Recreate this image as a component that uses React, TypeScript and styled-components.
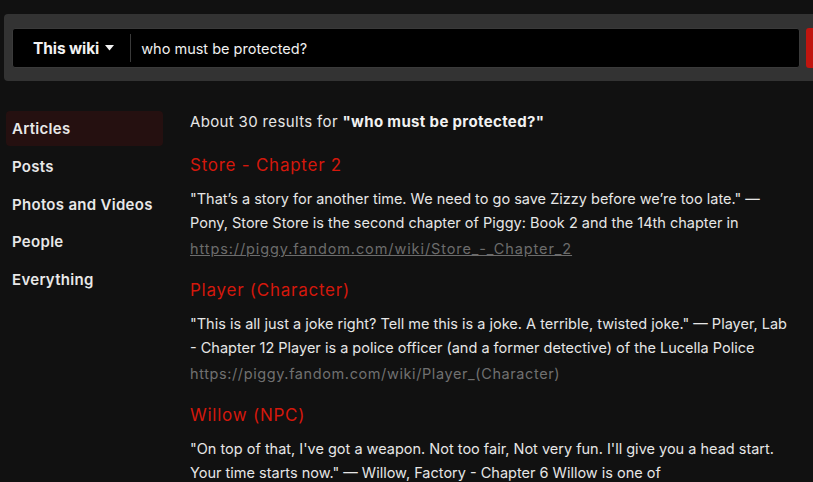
import React from "react";
import styled, { createGlobalStyle } from "styled-components";

const Global = createGlobalStyle`
  html, body { margin: 0; padding: 0; background: #111111; }
  body { font-family: Inter, "Open Sans", sans-serif; color: #e6e6e6; overflow: hidden; }
  * { box-sizing: border-box; }
`;

const Page = styled.div`
  width: 813px;
  height: 482px;
  overflow: hidden;
  background: #111111;
`;

const SearchPanel = styled.div`
  margin: 14px -20px 0 4px;
  height: 67px;
  background: #333333;
  border-radius: 4px;
  padding: 14px 8px 13px 8px;
  display: flex;
  gap: 6px;
`;

const SearchBox = styled.div`
  width: 788px;
  flex: none;
  background: #000;
  border: 1px solid #3a3a3a;
  border-radius: 3px;
  display: flex;
  align-items: center;
`;

const Scope = styled.div`
  display: flex;
  align-items: center;
  gap: 6px;
  padding: 0 16px 0 20px;
  height: 28px;
  border-right: 1px solid #3a3a3a;
  font-weight: 700;
  font-size: 15.5px;
  color: #f2f2f2;
  letter-spacing: -0.1px;
`;

const Query = styled.div`
  padding-left: 10px;
  font-size: 14.5px;
  color: #f0f0f0;
`;

const SubmitButton = styled.div`
  width: 40px;
  background: #c0150f;
  border-radius: 3px;
`;

const Body = styled.div`
  display: flex;
  padding: 30px 0 0 6px;
`;

const Sidebar = styled.nav`
  width: 157px;
  flex: none;
  display: flex;
  flex-direction: column;
  gap: 2.75px;
`;

const NavItem = styled.div<{ $active?: boolean }>`
  height: 35px;
  display: flex;
  align-items: center;
  padding-left: 6px;
  border-radius: 4px;
  background: ${(p) => (p.$active ? "#251010" : "transparent")};
  font-weight: 600;
  font-size: 15px;
  letter-spacing: 0.3px;
  color: #e8e8e8;
`;

const Results = styled.main`
  margin-left: 27px;
  flex: 1;
  min-width: 0;
  display: flex;
  flex-direction: column;
  gap: 18px;
`;

const Summary = styled.div`
  font-size: 15px;
  line-height: 20px;
  padding: 1px 0 3px;
  letter-spacing: 0.35px;
  color: #e6e6e6;
  b { font-weight: 700; color: #f2f2f2; }
`;

const Result = styled.div``;

const Title = styled.div`
  font-size: 17px;
  line-height: 24px;
  letter-spacing: 0.75px;
  color: #d4180c;
`;

const Snippet = styled.div`
  margin-top: 10px;
  font-size: 14.5px;
  line-height: 24px;
  color: #e6e6e6;
  white-space: nowrap;
`;

const Url = styled.div<{ $visited?: boolean }>`
  margin-top: 3px;
  font-size: 14.5px;
  line-height: 22px;
  letter-spacing: ${(p) => (p.$visited ? "0.6px" : "0.9px")};
  color: ${(p) => (p.$visited ? "#707070" : "#6c6c6c")};
  text-decoration: ${(p) => (p.$visited ? "none" : "underline")};
`;

const Caret = () => (
  <svg width="9" height="6" viewBox="0 0 9 6">
    <path d="M0 0 L9 0 L4.5 5.5 Z" fill="#f2f2f2" />
  </svg>
);

const nav = ["Articles", "Posts", "Photos and Videos", "People", "Everything"];

const results = [
  {
    title: "Store - Chapter 2",
    lines: [
      "\"That’s a story for another time. We need to go save Zizzy before we’re too late.\" —",
      "Pony, Store Store is the second chapter of Piggy: Book 2 and the 14th chapter in",
    ],
    url: "https://piggy.fandom.com/wiki/Store_-_Chapter_2",
    visited: false,
  },
  {
    title: "Player (Character)",
    lines: [
      "\"This is all just a joke right? Tell me this is a joke. A terrible, twisted joke.\" — Player, Lab",
      "- Chapter 12 Player is a police officer (and a former detective) of the Lucella Police",
    ],
    url: "https://piggy.fandom.com/wiki/Player_(Character)",
    visited: true,
  },
  {
    title: "Willow (NPC)",
    lines: [
      "\"On top of that, I've got a weapon. Not too fair, Not very fun. I'll give you a head start.",
      "Your time starts now.\" — Willow, Factory - Chapter 6 Willow is one of",
    ],
    url: "https://piggy.fandom.com/wiki/Willow_(NPC)",
    visited: true,
  },
];

export default function App() {
  return (
    <Page>
      <Global />
      <SearchPanel>
        <SearchBox>
          <Scope>
            This wiki <Caret />
          </Scope>
          <Query>who must be protected?</Query>
        </SearchBox>
        <SubmitButton />
      </SearchPanel>
      <Body>
        <Sidebar>
          {nav.map((n, i) => (
            <NavItem key={n} $active={i === 0}>
              {n}
            </NavItem>
          ))}
        </Sidebar>
        <Results>
          <Summary>
            About 30 results for <b>"who must be protected?"</b>
          </Summary>
          {results.map((r) => (
            <Result key={r.title}>
              <Title>{r.title}</Title>
              <Snippet>
                {r.lines.map((l) => (
                  <div key={l}>{l}</div>
                ))}
              </Snippet>
              <Url $visited={r.visited}>{r.url}</Url>
            </Result>
          ))}
        </Results>
      </Body>
    </Page>
  );
}
